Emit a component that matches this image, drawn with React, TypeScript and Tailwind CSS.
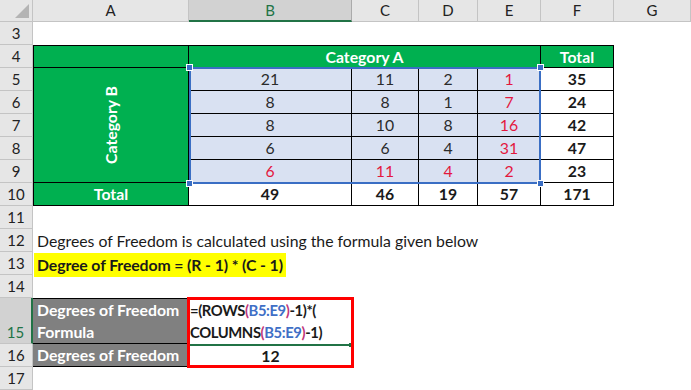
const colW = ["w-[156px]", "w-[163px]", "w-[67px]", "w-[59px]", "w-[63px]", "w-[73px]", "w-[77px]"];
const colNames = ["A", "B", "C", "D", "E", "F", "G"];
const rowNums = [3, 4, 5, 6, 7, 8, 9, 10, 11, 12, 13, 14, 15, 16, 17];

const colStart = ["col-start-1", "col-start-2", "col-start-3", "col-start-4", "col-start-5", "col-start-6", "col-start-7"];
const rowStart = [
  "row-start-1", "row-start-2", "row-start-3", "row-start-4", "row-start-5",
  "row-start-6", "row-start-7", "row-start-8", "row-start-9", "row-start-10",
];

// rows 5..9, columns B..E  (true = red text)
const data: [number, boolean][][] = [
  [[21, false], [11, false], [2, false], [1, true]],
  [[8, false], [8, false], [1, false], [7, true]],
  [[8, false], [10, false], [8, false], [16, true]],
  [[6, false], [6, false], [4, false], [31, true]],
  [[6, true], [11, true], [4, true], [2, true]],
];
const rowTotals = [35, 24, 42, 47, 23];
const colTotals = [49, 46, 19, 57, 171];

function Handle({ className }: { className: string }) {
  return <div className={`absolute w-[7px] h-[7px] bg-[#3a6ec4] border border-white ${className}`} />;
}

export default function App() {
  return (
    <div className="w-[691px] h-[390px] overflow-hidden bg-white font-[family-name:Lato,sans-serif] text-[15.8px] text-[#1a1a1a]">
      {/* column headers */}
      <div className="flex h-[22px] text-[15px]">
        <div className="w-[33px] h-[22px] bg-[#e6e6e6] border-r border-b border-[#c4c4c4] relative">
          <div className="absolute right-[3px] bottom-[3px] w-0 h-0 border-l-[14px] border-l-transparent border-b-[14px] border-b-[#b4b4b4]" />
        </div>
        {colNames.map((c, i) =>
          c === "B" ? (
            <div
              key={c}
              className={`${colW[i]} h-[22px] flex items-center justify-center bg-[#d2d2d2] border-r border-[#ababab] border-b-2 border-b-[#217346] text-[#217346]`}
            >
              {c}
            </div>
          ) : (
            <div
              key={c}
              className={`${colW[i]} h-[22px] flex items-center justify-center bg-[#e6e6e6] border-r border-b border-[#c4c4c4] text-[#222]`}
            >
              {c}
            </div>
          )
        )}
      </div>

      <div className="flex">
        {/* row headers */}
        <div className="flex flex-col w-[33px] text-[15px]">
          {rowNums.map((n) =>
            n === 15 ? (
              <div
                key={n}
                className="h-[46px] flex items-end justify-center bg-[#d2d2d2] border-b border-[#c4c4c4] border-r-2 border-r-[#217346] text-[#217346] leading-[22px]"
              >
                {n}
              </div>
            ) : (
              <div
                key={n}
                className="h-[23px] flex items-end justify-center bg-[#e6e6e6] border-b border-r border-[#c4c4c4] leading-[22px] text-[#222]"
              >
                {n}
              </div>
            )
          )}
        </div>

        {/* cells */}
        <div className="relative grid grid-cols-[156px_163px_67px_59px_63px_73px_77px] grid-rows-[repeat(12,23px)_46px_23px_23px]">
          {/* row 4 */}
          <div className="col-start-1 row-start-2 bg-[#00b050] border border-black" />
          <div className="col-start-2 col-span-4 row-start-2 bg-[#00b050] border-t border-r border-black flex items-center justify-center font-bold text-white">
            Category A
          </div>
          <div className="col-start-6 row-start-2 bg-[#00b050] border-t border-r border-b border-black flex items-center justify-center font-bold text-white">
            Total
          </div>

          {/* rows 5-9 */}
          <div className="col-start-1 row-start-3 row-span-5 bg-[#00b050] border-l border-r border-b border-black flex items-center justify-center">
            <span className="[writing-mode:vertical-rl] rotate-180 font-bold text-white">Category B</span>
          </div>
          {data.map((row, r) =>
            row.map(([v, red], c) => (
              <div
                key={`${r}-${c}`}
                className={`${colStart[c + 1]} ${rowStart[r + 2]} bg-[#d9e1f2] border-r border-b border-black flex items-center justify-center ${
                  red ? "text-[#e3173e]" : "text-[#2b2b2b]"
                }`}
              >
                {v}
              </div>
            ))
          )}
          {rowTotals.map((v, r) => (
            <div
              key={`t${r}`}
              className={`col-start-6 ${rowStart[r + 2]} border-r border-b border-black flex items-center justify-center font-bold`}
            >
              {v}
            </div>
          ))}

          {/* row 10 */}
          <div className="col-start-1 row-start-8 bg-[#00b050] border-l border-r border-b border-black flex items-center justify-center font-bold text-white">
            Total
          </div>
          {colTotals.map((v, c) => (
            <div
              key={`c${c}`}
              className={`${colStart[c + 1]} row-start-8 border-r border-b border-black flex items-center justify-center font-bold`}
            >
              {v}
            </div>
          ))}

          {/* row 12 */}
          <div className="col-start-1 col-span-5 row-start-10 flex items-center pl-[4px] whitespace-nowrap">
            Degrees of Freedom is calculated using the formula given below
          </div>

          {/* row 13 */}
          <div className="col-start-1 col-span-3 row-start-11 pl-[1px] pt-[1px] whitespace-nowrap">
            <span className="inline-flex items-center h-[24px] px-[3px] bg-[#ffff00] font-bold tracking-[-0.1px]">
              Degree of Freedom = (R - 1) * (C - 1)
            </span>
          </div>

          {/* rows 15-16 */}
          <div className="col-start-1 row-start-13 bg-[#808080] border-t border-r border-b border-black flex flex-col justify-center pl-[4px] font-bold text-white leading-[22px] whitespace-nowrap">
            <span>Degrees of Freedom</span>
            <span>Formula</span>
          </div>
          <div className="col-start-2 row-start-13 flex flex-col justify-center pl-[1px] font-bold text-[14.8px] tracking-[-0.4px] leading-[22px] whitespace-nowrap">
            <span>
              =(ROWS<span className="text-[#c0367a]">(</span>
              <span className="text-[#3f6fc6]">B5:E9</span>
              <span className="text-[#c0367a]">)</span>-1)*(
            </span>
            <span>
              COLUMNS<span className="text-[#c0367a]">(</span>
              <span className="text-[#3f6fc6]">B5:E9</span>
              <span className="text-[#c0367a]">)</span>-1)
            </span>
          </div>
          <div className="col-start-1 row-start-14 bg-[#808080] border-r border-b border-black flex items-center pl-[4px] font-bold text-white whitespace-nowrap">
            Degrees of Freedom
          </div>
          <div className="col-start-2 row-start-14 flex items-center justify-center font-bold">12</div>

          {/* referenced range B5:E9 */}
          <div className="absolute left-[156px] top-[45px] w-[352px] h-[117px] border-2 border-[#3a6ec4] pointer-events-none">
            <Handle className="-left-[5px] -top-[5px]" />
            <Handle className="-right-[5px] -top-[5px]" />
            <Handle className="-left-[5px] -bottom-[5px]" />
            <Handle className="-right-[5px] -bottom-[5px]" />
          </div>

          {/* active cell edge */}
          <div className="absolute left-[157px] top-[322px] w-[162px] h-[2px] bg-[#217346]" />
          <div className="absolute left-[316px] top-[321px] w-[4px] h-[4px] bg-[#217346]" />

          {/* red callout */}
          <div className="absolute left-[154px] top-[275px] w-[167px] h-[71px] border-[3px] border-[#ff0000] pointer-events-none" />
        </div>
      </div>
    </div>
  );
}
